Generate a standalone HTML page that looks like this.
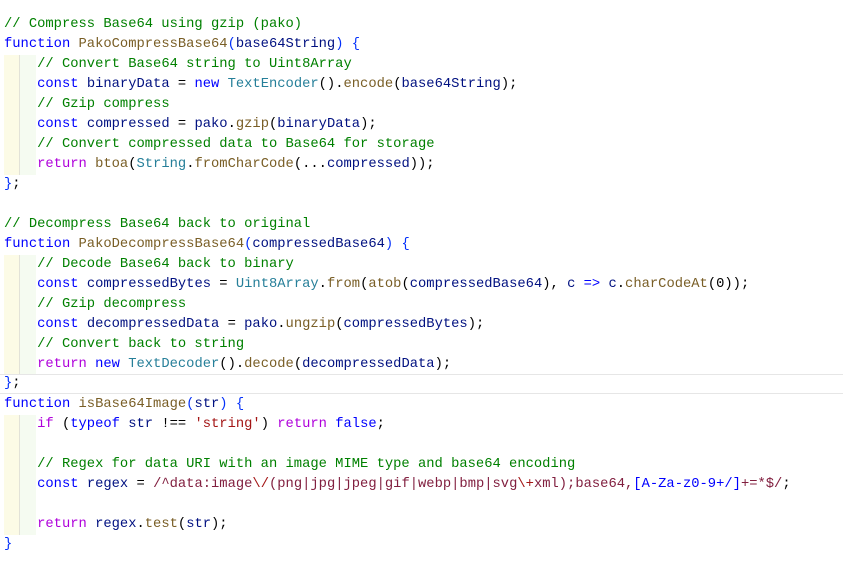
<!DOCTYPE html>
<html><head><meta charset="utf-8"><style>
html,body{margin:0;padding:0;background:#fff;width:843px;height:564px;overflow:hidden}
.code{position:absolute;top:15px;left:0;width:843px;font-family:"Liberation Mono",monospace;font-size:13.8px;color:#000}
.l{height:20px;line-height:20px;white-space:pre;padding-left:4px;position:relative}
.i{padding-left:4px}
.i::before{content:"";position:absolute;left:4px;top:0;width:15px;height:20px;background:#fcfbe6;border-right:1px solid #e2e2d8}
.i::after{content:"";position:absolute;left:20px;top:0;width:16px;height:20px;background:#f5fbf1}
.t{position:relative;z-index:1}
.hl{border-top:1px solid #e6e6e6;border-bottom:1px solid #e6e6e6;height:18px;line-height:18px;margin-top:-1px;margin-bottom:1px}
.c{color:#008000}.k{color:#0000ff}.f{color:#795e26}.p{color:#001080}.y{color:#267f99}.m{color:#af00db}.s{color:#a31515}.r{color:#811f3f}.b{color:#0431fa}
</style></head><body><div class="code">
<div class="l"><span class="c">// Compress Base64 using gzip (pako)</span></div>
<div class="l"><span class="k">function</span> <span class="f">PakoCompressBase64</span><span class="b">(</span><span class="p">base64String</span><span class="b">)</span> <span class="b">{</span></div>
<div class="l i"><span class="t">    <span class="c">// Convert Base64 string to Uint8Array</span></span></div>
<div class="l i"><span class="t">    <span class="k">const</span> <span class="p">binaryData</span> = <span class="k">new</span> <span class="y">TextEncoder</span>().<span class="f">encode</span>(<span class="p">base64String</span>);</span></div>
<div class="l i"><span class="t">    <span class="c">// Gzip compress</span></span></div>
<div class="l i"><span class="t">    <span class="k">const</span> <span class="p">compressed</span> = <span class="p">pako</span>.<span class="f">gzip</span>(<span class="p">binaryData</span>);</span></div>
<div class="l i"><span class="t">    <span class="c">// Convert compressed data to Base64 for storage</span></span></div>
<div class="l i"><span class="t">    <span class="m">return</span> <span class="f">btoa</span>(<span class="y">String</span>.<span class="f">fromCharCode</span>(...<span class="p">compressed</span>));</span></div>
<div class="l"><span class="b">}</span>;</div>
<div class="l"> </div>
<div class="l"><span class="c">// Decompress Base64 back to original</span></div>
<div class="l"><span class="k">function</span> <span class="f">PakoDecompressBase64</span><span class="b">(</span><span class="p">compressedBase64</span><span class="b">)</span> <span class="b">{</span></div>
<div class="l i"><span class="t">    <span class="c">// Decode Base64 back to binary</span></span></div>
<div class="l i"><span class="t">    <span class="k">const</span> <span class="p">compressedBytes</span> = <span class="y">Uint8Array</span>.<span class="f">from</span>(<span class="f">atob</span>(<span class="p">compressedBase64</span>), <span class="p">c</span> <span class="k">=&gt;</span> <span class="p">c</span>.<span class="f">charCodeAt</span>(0));</span></div>
<div class="l i"><span class="t">    <span class="c">// Gzip decompress</span></span></div>
<div class="l i"><span class="t">    <span class="k">const</span> <span class="p">decompressedData</span> = <span class="p">pako</span>.<span class="f">ungzip</span>(<span class="p">compressedBytes</span>);</span></div>
<div class="l i"><span class="t">    <span class="c">// Convert back to string</span></span></div>
<div class="l i"><span class="t">    <span class="m">return</span> <span class="k">new</span> <span class="y">TextDecoder</span>().<span class="f">decode</span>(<span class="p">decompressedData</span>);</span></div>
<div class="l hl"><span class="b">}</span>;</div>
<div class="l"><span class="k">function</span> <span class="f">isBase64Image</span><span class="b">(</span><span class="p">str</span><span class="b">)</span> <span class="b">{</span></div>
<div class="l i"><span class="t">    <span class="m">if</span> (<span class="k">typeof</span> <span class="p">str</span> !== <span class="s">'string'</span>) <span class="m">return</span> <span class="k">false</span>;</span></div>
<div class="l i"><span class="t"> </span></div>
<div class="l i"><span class="t">    <span class="c">// Regex for data URI with an image MIME type and base64 encoding</span></span></div>
<div class="l i"><span class="t">    <span class="k">const</span> <span class="p">regex</span> = <span class="r">/^data:image</span><span class="s">\/</span><span class="r">(png|jpg|jpeg|gif|webp|bmp|svg</span><span class="s">\+</span><span class="r">xml);base64,</span><span class="k">[A-Za-z0-9+/]</span><span class="r">+=*$/</span>;</span></div>
<div class="l i"><span class="t"> </span></div>
<div class="l i"><span class="t">    <span class="m">return</span> <span class="p">regex</span>.<span class="f">test</span>(<span class="p">str</span>);</span></div>
<div class="l"><span class="b">}</span></div>
</div></body></html>
